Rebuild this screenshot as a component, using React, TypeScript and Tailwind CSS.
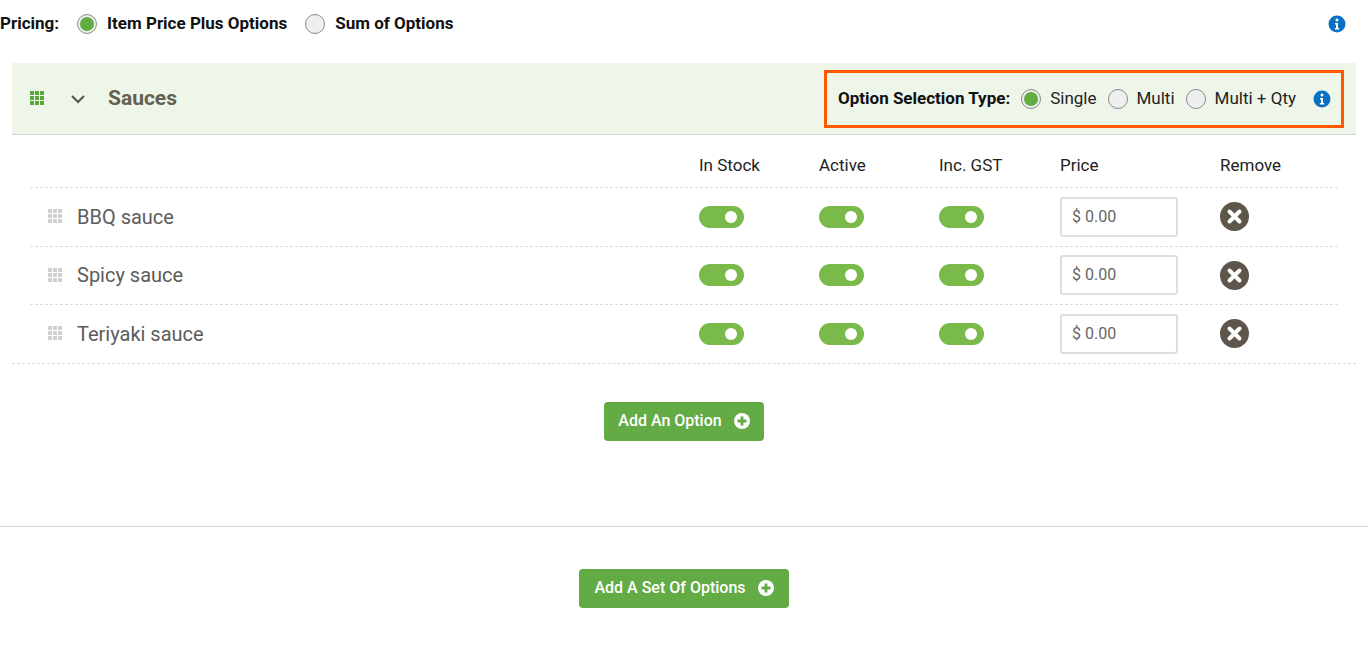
import React from "react";

const Radio = ({ on }: { on?: boolean }) => (
  <span className="w-5 h-5 rounded-full border border-[#8a8a8a] bg-[#efefef] flex items-center justify-center shrink-0">
    {on && <span className="w-3.5 h-3.5 rounded-full bg-[#5fae3f]" />}
  </span>
);

const Info = () => (
  <svg width="18" height="18" viewBox="0 0 18 18">
    <circle cx="9" cy="9" r="8.5" fill="#0a70c4" />
    <circle cx="9" cy="5" r="1.5" fill="#fff" />
    <path d="M7 8h3v5h1.2v1.4H6.8V13H8V9.4H7z" fill="#fff" />
  </svg>
);

const Grip = ({ color, size }: { color: string; size: number }) => (
  <svg width={size} height={size} viewBox="0 0 15 15">
    {[0, 5, 10].map((y) =>
      [0, 5, 10].map((x) => <rect key={`${x}${y}`} x={x} y={y} width="4" height="4" fill={color} />)
    )}
  </svg>
);

const Toggle = () => (
  <span className="w-[45px] h-[22px] rounded-full bg-[#7aba4a] flex items-center justify-end pr-[7px]">
    <span className="w-3 h-3 rounded-full bg-white" />
  </span>
);

const Plus = () => (
  <svg width="16" height="16" viewBox="0 0 16 16">
    <circle cx="8" cy="8" r="8" fill="#fff" />
    <path d="M6.6 3.5h2.8v3.1h3.1v2.8H9.4v3.1H6.6V9.4H3.5V6.6h3.1z" fill="#62ab45" />
  </svg>
);

const rows = ["BBQ sauce", "Spicy sauce", "Teriyaki sauce"];

export default function App() {
  return (
    <div className="w-[1368px] h-[650px] bg-white text-[#222] font-[family-name:Roboto,sans-serif]">
      <div className="h-[48px] flex items-center justify-between pr-[22px]">
        <div className="flex items-center text-[17px] font-bold text-[#111]">
          <span className="mr-[18px]">Pricing:</span>
          <Radio on />
          <span className="ml-[10px] mr-[18px]">Item Price Plus Options</span>
          <Radio />
          <span className="ml-[10px]">Sum of Options</span>
        </div>
        <Info />
      </div>
      <div className="mx-3 mt-[15px] h-[72px] bg-[#eef6ea] border-b border-[#d4d4d4] flex items-center justify-between pl-[18px] pr-3">
        <div className="flex items-center">
          <Grip color="#5aa83c" size={15} />
          <svg className="ml-[24px]" width="18" height="18" viewBox="0 0 18 18">
            <path d="M3 6l6 6 6-6" stroke="#555" strokeWidth="2" fill="none" />
          </svg>
          <span className="ml-[21px] text-[21px] font-bold text-[#66604f]">Sauces</span>
        </div>
        <div className="h-[58px] border-[3px] border-[#ff5a00] flex items-center pl-[11px] pr-[10px] gap-[11px] text-[17px]">
          <span className="font-bold text-[#111]">Option Selection Type:</span>
          <span className="flex items-center gap-[9px]"><Radio on />Single</span>
          <span className="flex items-center gap-[9px]"><Radio />Multi</span>
          <span className="flex items-center gap-[9px]"><Radio />Multi + Qty</span>
          <span className="ml-[6px]"><Info /></span>
        </div>
      </div>
      <div className="mx-3">
        <div className="mx-[18px] h-[53px] flex items-end pb-[9px] border-b border-dashed border-[#dcdcdc] text-[17px] text-[#222]">
          <span className="ml-[669px] w-[120px]">In Stock</span>
          <span className="w-[120px]">Active</span>
          <span className="w-[121px]">Inc. GST</span>
          <span className="w-[160px]">Price</span>
          <span>Remove</span>
        </div>
        {rows.map((r, i) => (
          <div
            key={r}
            className={`h-[58.5px] flex items-center border-b border-dashed border-[#dcdcdc] ${
              i === rows.length - 1 ? "" : "mx-[18px]"
            }`}
          >
            <div className={`flex items-center ${i === rows.length - 1 ? "pl-[36px] w-[687px]" : "pl-[18px] w-[669px]"}`}>
              <Grip color="#d0d0d0" size={15} />
              <span className="ml-[14px] text-[20px] text-[#5c5c5c]">{r}</span>
            </div>
            <span className="w-[120px]"><Toggle /></span>
            <span className="w-[120px]"><Toggle /></span>
            <span className="w-[121px]"><Toggle /></span>
            <span className="w-[160px]">
              <span className="w-[118px] h-[40px] border-2 border-[#dedede] rounded-[3px] flex items-center px-[10px] text-[16px] text-[#666]">
                $ 0.00
              </span>
            </span>
            <svg width="29" height="29" viewBox="0 0 29 29">
              <circle cx="14.5" cy="14.5" r="14.5" fill="#5e554b" />
              <path d="M9.5 9.5l10 10M19.5 9.5l-10 10" stroke="#fff" strokeWidth="4" strokeLinecap="round" />
            </svg>
          </div>
        ))}
      </div>
      <div className="flex justify-center mt-[38px]">
        <button className="h-[39px] w-[160px] rounded-[4px] bg-[#62ab45] text-white text-[16px] font-medium flex items-center justify-center gap-[12px]">
          Add An Option <Plus />
        </button>
      </div>
      <div className="mt-[85px] border-t border-[#d4d4d4]" />
      <div className="flex justify-center mt-[42px]">
        <button className="h-[39px] w-[210px] rounded-[4px] bg-[#62ab45] text-white text-[16px] font-medium flex items-center justify-center gap-[12px]">
          Add A Set Of Options <Plus />
        </button>
      </div>
    </div>
  );
}
